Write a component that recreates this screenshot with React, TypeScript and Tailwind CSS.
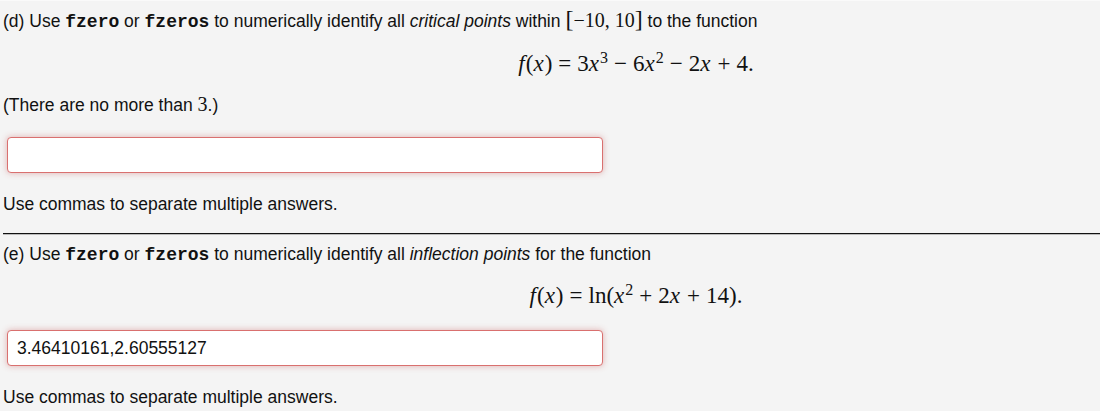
import React from "react";

const sans = { fontFamily: '"Liberation Sans", Arial, sans-serif' };
const mono = '"Liberation Mono", "Courier New", monospace';
const serif = '"Liberation Serif", "Times New Roman", serif';

function Code({ children }: { children: React.ReactNode }) {
  return (
    <span className="font-bold text-[18px]" style={{ fontFamily: mono }}>
      {children}
    </span>
  );
}

function M({ children }: { children: React.ReactNode }) {
  return (
    <span className="text-[20px]" style={{ fontFamily: serif }}>
      {children}
    </span>
  );
}

function I({ children }: { children: React.ReactNode }) {
  return <i className="pr-[1px]" style={{ fontFamily: serif }}>{children}</i>;
}

function Op({ children }: { children: React.ReactNode }) {
  return <span className="mx-[6px]">{children}</span>;
}

function AnswerBox({ value }: { value: string }) {
  return (
    <div className="pl-[7px]">
      <div className="w-[596px] h-[36px] rounded-[4px] border border-[#d9706f] bg-white shadow-[0_0_6px_rgba(200,90,90,0.45)] flex items-center pl-[9px] text-[17.5px] text-[#111]">
        {value}
      </div>
    </div>
  );
}

export default function App() {
  return (
    <div
      className="w-[1100px] h-[411px] overflow-hidden bg-[#f4f4f4] text-[#111] text-[17.5px] border-t border-[#fafafa]"
      style={sans}
    >
      <div className="pl-[3px] pt-[5px] h-[26px] leading-[26px] whitespace-nowrap">
        (d) Use <Code>fzero</Code> or <Code>fzeros</Code> to numerically identify all <i>critical points</i> within{" "}
        <M>
          <span className="text-[24px]">[</span>−10, 10<span className="text-[24px]">]</span>
        </M>{" "}
        to the function
      </div>

      <div className="flex justify-center pl-[172px] mt-[23px] h-[28px] leading-[28px] text-[23px]" style={{ fontFamily: serif }}>
        <span>
          <I>f</I>(<I>x</I>)<Op>=</Op>3<I>x</I>
          <sup className="text-[16px]">3</sup>
          <Op>−</Op>6<I>x</I>
          <sup className="text-[16px]">2</sup>
          <Op>−</Op>2<I>x</I>
          <Op>+</Op>4.
        </span>
      </div>

      <div className="pl-[3px] mt-[14px] h-[24px] leading-[24px]">
        (There are no more than <M>3</M>.)
      </div>

      <div className="mt-[21px]">
        <AnswerBox value="" />
      </div>

      <div className="pl-[3px] mt-[19px] h-[24px] leading-[24px]">Use commas to separate multiple answers.</div>

      <div className="ml-[3px] mt-[17px] h-[2px] border-t border-[#111] border-b border-b-[#bbb]"></div>

      <div className="pl-[3px] mt-[7px] h-[24px] leading-[24px] whitespace-nowrap">
        (e) Use <Code>fzero</Code> or <Code>fzeros</Code> to numerically identify all <i>inflection points</i> for the function
      </div>

      <div className="flex justify-center pl-[172px] mt-[16px] h-[28px] leading-[28px] text-[23px]" style={{ fontFamily: serif }}>
        <span>
          <I>f</I>(<I>x</I>)<Op>=</Op>ln(<I>x</I>
          <sup className="text-[16px]">2</sup>
          <Op>+</Op>2<I>x</I>
          <Op>+</Op>14).
        </span>
      </div>

      <div className="mt-[20px]">
        <AnswerBox value="3.46410161,2.60555127" />
      </div>

      <div className="pl-[3px] mt-[19px] h-[24px] leading-[24px]">Use commas to separate multiple answers.</div>
    </div>
  );
}
